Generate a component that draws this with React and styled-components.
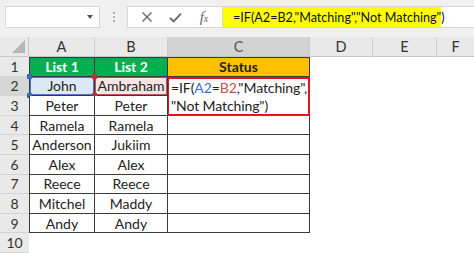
import React from "react";
import styled, { createGlobalStyle } from "styled-components";

const GlobalStyle = createGlobalStyle`
  body {
    margin: 0;
    background: #fff;
    font-family: "Lato", "Liberation Sans", sans-serif;
  }
`;

const names = [
  ["John", "Ambraham"],
  ["Peter", "Peter"],
  ["Ramela", "Ramela"],
  ["Anderson", "Jukiim"],
  ["Alex", "Alex"],
  ["Reece", "Reece"],
  ["Mitchel", "Maddy"],
  ["Andy", "Andy"],
];

const App = () => {
  return <Page>
    <GlobalStyle />
    <Toolbar>
      <NameBox>
        <Caret />
      </NameBox>
      <Grip><i /><i /><i /></Grip>
      <ActionBox>
        <Action>
          <svg width="12" height="12" viewBox="0 0 12 12">
            <path d="M1.5 1.5 L10.5 10.5 M10.5 1.5 L1.5 10.5" stroke="#666" strokeWidth="1.4" fill="none" />
          </svg>
        </Action>
        <Action>
          <svg width="13" height="11" viewBox="0 0 13 11">
            <path d="M1 5.8 L4.6 9.4 L12 1.6" stroke="#666" strokeWidth="1.8" fill="none" />
          </svg>
        </Action>
        <Action>
          <Fx>f<small>x</small></Fx>
        </Action>
      </ActionBox>
      <FormulaBox>
        <Highlight>=IF(A2=B2,"Matching","Not Matching")</Highlight>
      </FormulaBox>
    </Toolbar>

    <Sheet>
      <Corner><Triangle /></Corner>
      <ColHead>A</ColHead>
      <ColHead>B</ColHead>
      <ColHead $active>C</ColHead>
      <ColHead>D</ColHead>
      <ColHead>E</ColHead>
      <ColHead $last>F</ColHead>

      <RowNum>1</RowNum>
      <Cell $first $top $bg="#00b050" $color="#fff" $bold>List 1</Cell>
      <Cell $top $bg="#00b050" $color="#fff" $bold>List 2</Cell>
      <Cell $top $bg="#ffc000" $bold>Status</Cell>
      <Blank /><Blank /><Blank />

      {names.map(([a, b], i) => (
        <React.Fragment key={i}>
          <RowNum $active={i == 0}>{i + 2}</RowNum>
          {i == 0 ? <>
            <Cell $first $bg="#dde8f6" $ring="#4a78c2">
              {a}
              <Handle $color="#3d6db5" />
              <Handle $bottom $color="#3d6db5" />
            </Cell>
            <Cell $bg="#f9e5e5" $ring="#c0504d">
              {b}
              <Handle $color="#b0393a" />
              <Handle $bottom $color="#b0393a" />
            </Cell>
            <Editing>
              =IF(<Ref $c="#3c6ec4">A2</Ref>=<Ref $c="#c0504d">B2</Ref>,"Matching",<br />
              "Not Matching")
            </Editing>
          </> : <>
            <Cell $first>{a}</Cell>
            <Cell>{b}</Cell>
            {i > 1 ? <Cell /> : null}
          </>}
          <Blank /><Blank /><Blank />
        </React.Fragment>
      ))}

      <RowNum>10</RowNum>
      <Blank /><Blank /><Blank /><Blank /><Blank /><Blank />
    </Sheet>
  </Page>
}

export default App;

const Page = styled.div`
  width: 474px;
  height: 253px;
  overflow: hidden;
`

const Toolbar = styled.div`
  display: flex;
  align-items: center;
  height: 37px;
  box-sizing: border-box;
  padding: 6px 0 9px 5px;
  background-color: #f0f0f0;
`

const NameBox = styled.div`
  position: relative;
  width: 95px;
  height: 22px;
  box-sizing: border-box;
  background: #fff;
  border: 1px solid #d6d6d6;
`

const Caret = styled.span`
  position: absolute;
  right: 6px;
  top: 8px;
  border-left: 3.5px solid transparent;
  border-right: 3.5px solid transparent;
  border-top: 4px solid #555;
`

const Grip = styled.div`
  display: flex;
  flex-direction: column;
  gap: 2px;
  width: 27px;
  align-items: center;

  & > i {
    width: 2px;
    height: 2px;
    background: #b0b0b0;
  }
`

const ActionBox = styled.div`
  display: flex;
  align-items: center;
  width: 95px;
  height: 22px;
  box-sizing: border-box;
  padding: 0 8px 0 9px;
  justify-content: space-between;
  background: #fff;
  border: 1px solid #d6d6d6;
  border-right: none;
`

const Action = styled.span`
  display: flex;
  align-items: center;
  justify-content: center;
  width: 20px;
`

const Fx = styled.span`
  font-family: "Liberation Serif", serif;
  font-style: italic;
  font-size: 15px;
  color: #666;

  & small {
    font-size: 10px;
  }
`

const FormulaBox = styled.div`
  flex: 1;
  height: 22px;
  box-sizing: border-box;
  background: #fff;
  border: 1px solid #d6d6d6;
  border-right: none;
  display: flex;
`

const Highlight = styled.span`
  display: flex;
  align-items: center;
  width: 218px;
  box-sizing: border-box;
  padding-left: 10px;
  background: #ffff00;
  font-size: 12.6px;
  color: #111;
  white-space: nowrap;
`

const Sheet = styled.div`
  display: grid;
  grid-template-columns: 29px 66px 73px 142px 63px 64px 1fr;
  grid-template-rows: 20px repeat(10, 19.6px);
  font-size: 14px;
  color: #222;
`

const Corner = styled.div`
  position: relative;
  background: #e9e9e9;
  border-right: 1px solid #c8c8c8;
  border-bottom: 1px solid #c8c8c8;
`

const Triangle = styled.span`
  position: absolute;
  right: 3px;
  bottom: 3px;
  width: 0;
  height: 0;
  border-left: 13px solid transparent;
  border-bottom: 13px solid #b6b6b6;
`

const ColHead = styled.div`
  display: flex;
  align-items: center;
  justify-content: center;
  font-size: 14.5px;
  background: ${p => p.$active ? "#d3d3d3" : "#e9e9e9"};
  color: ${p => p.$active ? "#555" : "#333"};
  border-right: ${p => p.$last ? "none" : "1px solid #cdcdcd"};
  border-bottom: 1px solid #c6c6c6;
`

const RowNum = styled.div`
  display: flex;
  align-items: center;
  justify-content: center;
  background: ${p => p.$active ? "#d6d6d6" : "#e9e9e9"};
  color: #333;
  border-bottom: 1px solid #d4d4d4;
  box-sizing: border-box;
`

const Cell = styled.div`
  position: relative;
  display: flex;
  align-items: center;
  justify-content: center;
  box-sizing: border-box;
  white-space: nowrap;
  background: ${p => p.$bg || "#fff"};
  color: ${p => p.$color || "#222"};
  font-weight: ${p => p.$bold ? 700 : 400};
  border-right: 1px solid #3a3a3a;
  border-bottom: 1px solid #3a3a3a;
  border-left: ${p => p.$first ? "1px solid #3a3a3a" : "none"};
  border-top: ${p => p.$top ? "1px solid #3a3a3a" : "none"};
  box-shadow: ${p => p.$ring ? `inset 0 0 0 1px ${p.$ring}` : "none"};
`

const Handle = styled.span`
  position: absolute;
  width: 5px;
  height: 5px;
  background: ${p => p.$color};
  left: -3px;
  ${p => p.$bottom ? "bottom: -3px;" : "top: -3px;"}
`

const Editing = styled.div`
  grid-row: span 2;
  box-sizing: border-box;
  border: 2px solid #e3141c;
  margin-left: -1px;
  padding: 0 0 0 2px;
  line-height: 18.6px;
  white-space: nowrap;
  color: #222;
  background: #fff;
  letter-spacing: -0.1px;
`

const Ref = styled.span`
  color: ${p => p.$c};
`

const Blank = styled.div`
  background: #fff;
`
